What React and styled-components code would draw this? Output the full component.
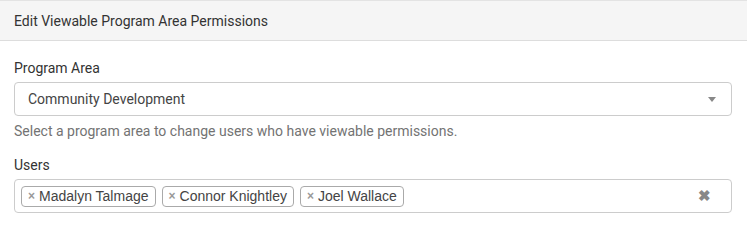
import React from "react";
import styled, { createGlobalStyle } from "styled-components";

const Global = createGlobalStyle`
  html, body { margin: 0; padding: 0; background: #fff; }
  body { font-family: Roboto, "Liberation Sans", Arial, sans-serif; font-size: 14px; color: #333; }
  * { box-sizing: border-box; }
`;

const Panel = styled.div`
  width: 747px;
  border-top: 1px solid #e3e3e3;
`;

const Header = styled.div`
  height: 40px;
  background: #f5f5f5;
  border-bottom: 1px solid #dddddd;
  padding: 0 14px;
  display: flex;
  align-items: center;
  font-size: 14px;
  color: #333;
`;

const Body = styled.div`
  padding: 17px 15px 0 14px;
  display: flex;
  flex-direction: column;
`;

const Label = styled.label`
  font-size: 14px;
  color: #333;
  line-height: 20px;
  margin-bottom: 4px;
`;

const Select = styled.div`
  height: 34px;
  border: 1px solid #cccccc;
  border-radius: 4px;
  display: flex;
  align-items: center;
  padding: 0 14px 0 13px;
  color: #444;
  font-size: 14px;
`;

const SelectText = styled.span`
  flex: 1;
`;

const Arrow = styled.span`
  width: 0;
  height: 0;
  border-left: 4px solid transparent;
  border-right: 4px solid transparent;
  border-top: 5px solid #888;
  margin-right: 1px;
`;

const Help = styled.div`
  color: #737373;
  font-size: 14px;
  line-height: 20px;
  margin-top: 5px;
  margin-bottom: 14px;
`;

const Multi = styled.div`
  height: 34px;
  border: 1px solid #cccccc;
  border-radius: 4px;
  display: flex;
  align-items: center;
  padding: 0 20px 0 6px;
  gap: 6px;
`;

const Tag = styled.span`
  display: inline-flex;
  align-items: center;
  height: 21px;
  border: 1px solid #aaaaaa;
  border-radius: 4px;
  padding: 0 6px 0 6px;
  font-family: "Liberation Sans", Arial, sans-serif;
  font-size: 14px;
  color: #444;
  background: #fff;
`;

const TagX = styled.span`
  color: #999;
  font-weight: bold;
  font-size: 12px;
  margin-right: 4px;
  line-height: 1;
`;

const Spacer = styled.span`
  flex: 1;
`;

const Clear = styled.span`
  color: #888;
  font-weight: bold;
  font-size: 15px;
  line-height: 1;
`;

const users = ["Madalyn Talmage", "Connor Knightley", "Joel Wallace"];

export default function App() {
  return (
    <>
      <Global />
      <Panel>
        <Header>Edit Viewable Program Area Permissions</Header>
        <Body>
          <Label>Program Area</Label>
          <Select>
            <SelectText>Community Development</SelectText>
            <Arrow />
          </Select>
          <Help>Select a program area to change users who have viewable permissions.</Help>
          <Label>Users</Label>
          <Multi>
            {users.map((u) => (
              <Tag key={u}>
                <TagX>×</TagX>
                {u}
              </Tag>
            ))}
            <Spacer />
            <Clear>✖</Clear>
          </Multi>
        </Body>
      </Panel>
    </>
  );
}
